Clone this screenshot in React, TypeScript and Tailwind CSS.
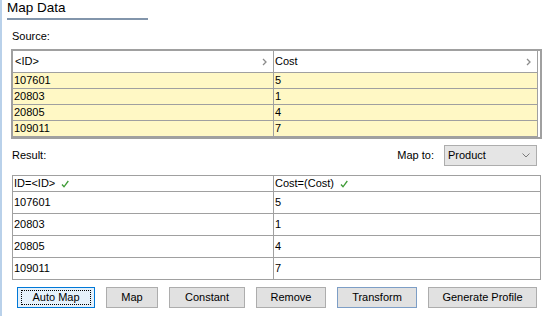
import React from "react";

const FONT = { fontFamily: '"Liberation Sans", Arial, sans-serif' };

function Chevron() {
  return (
    <svg width="5" height="8" viewBox="0 0 5 8" className="shrink-0">
      <path d="M1 1 L4 4 L1 7" fill="none" stroke="#8c8c8c" strokeWidth="1.3" />
    </svg>
  );
}

function Check() {
  return (
    <svg width="8" height="8" viewBox="0 0 8 8" className="ml-[6px] shrink-0">
      <path d="M1 4.5 L3 6.8 L7.3 1" fill="none" stroke="#3d9b35" strokeWidth="1.3" />
    </svg>
  );
}

const source = [
  ["107601", "5"],
  ["20803", "1"],
  ["20805", "4"],
  ["109011", "7"],
];

function Btn({ label, w, variant }: { label: string; w: string; variant?: "focus" | "hover" }) {
  const base =
    "h-[21px] flex items-center justify-center text-[11px] text-black border " + w + " ";
  if (variant === "focus")
    return (
      <div className={base + "bg-[#e5f1fb] border-[#0078d7]"}>
        <div className="w-[calc(100%-6px)] h-[15px] border border-dotted border-black flex items-center justify-center">
          {label}
        </div>
      </div>
    );
  if (variant === "hover")
    return <div className={base + "bg-[#e1e1e1] border-[#7d9ec6]"}>{label}</div>;
  return <div className={base + "bg-[#e1e1e1] border-[#adadad]"}>{label}</div>;
}

export default function App() {
  return (
    <div
      className="w-[546px] h-[316px] bg-white border-l-2 border-[#b9d1ea] flex flex-col text-black overflow-hidden"
      style={FONT}
    >
      <div className="pl-[5px] text-[13.5px] leading-[15px]">Map Data</div>
      <div className="ml-[5px] mt-[3px] w-[141px] h-[2px] bg-[#8295ab]" />

      <div className="ml-[10px] mt-[10px] text-[11px] leading-[13px]">Source:</div>

      <div className="ml-[9px] mt-[6px] w-[531px] border-2 border-[#a0a0a0] pr-[2px]">
        <div className="grid grid-cols-[261px_264px] text-[11px]">
          <div className="h-[22px] border-r border-b border-[#a0a0a0] flex items-center justify-between pl-[2px] pr-[6px]">
            <span>&lt;ID&gt;</span>
            <Chevron />
          </div>
          <div className="h-[22px] border-r border-b border-[#a0a0a0] flex items-center justify-between pl-[1px] pr-[6px]">
            <span>Cost</span>
            <Chevron />
          </div>
          {source.map(([a, b], i) => (
            <React.Fragment key={i}>
              <div className="h-[16px] bg-[#fff8c5] border-r border-b border-[#a0a0a0] pl-[1px] leading-[15px]">
                {a}
              </div>
              <div className="h-[16px] bg-[#fff8c5] border-r border-b border-[#a0a0a0] pl-[1px] leading-[15px]">
                {b}
              </div>
            </React.Fragment>
          ))}
        </div>
      </div>

      <div className="ml-[10px] mr-[9px] mt-[6px] h-[21px] flex items-center justify-between text-[11px]">
        <span className="leading-[13px]">Result:</span>
        <div className="flex items-center">
          <span className="mr-[10px] leading-[13px]">Map to:</span>
          <div className="w-[93px] h-[21px] bg-[#e5e5e5] border border-[#adadad] flex items-center justify-between pl-[3px] pr-[6px]">
            <span>Product</span>
            <svg width="8" height="5" viewBox="0 0 8 5">
              <path d="M0.5 0.5 L4 4 L7.5 0.5" fill="none" stroke="#7a7a7a" strokeWidth="1" />
            </svg>
          </div>
        </div>
      </div>

      <div className="ml-[10px] mt-[9px] w-[529px] border-l border-t border-r border-[#a0a0a0]">
        <div className="grid grid-cols-[261px_1fr] text-[11px]">
          <div className="h-[16px] border-r border-b border-[#a0a0a0] flex items-center pl-[1px]">
            <span>ID=&lt;ID&gt;</span>
            <Check />
          </div>
          <div className="h-[16px] border-b border-[#a0a0a0] flex items-center pl-[1px]">
            <span>Cost=(Cost)</span>
            <Check />
          </div>
          {source.map(([a, b], i) => (
            <React.Fragment key={i}>
              <div className="h-[22px] border-r border-b border-[#a0a0a0] pl-[1px] flex items-center">
                {a}
              </div>
              <div className="h-[22px] border-b border-[#a0a0a0] pl-[1px] flex items-center">{b}</div>
            </React.Fragment>
          ))}
        </div>
      </div>

      <div className="ml-[15px] mt-[7px] flex gap-[11px]">
        <Btn label="Auto Map" w="w-[78px]" variant="focus" />
        <Btn label="Map" w="w-[52px]" />
        <Btn label="Constant" w="w-[76px]" />
        <Btn label="Remove" w="w-[70px]" />
        <Btn label="Transform" w="w-[80px]" variant="hover" />
        <Btn label="Generate Profile" w="w-[109px]" />
      </div>
    </div>
  );
}
